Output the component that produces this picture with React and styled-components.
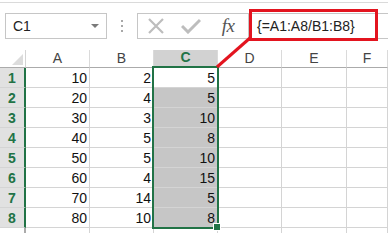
import React from 'react'
import styled, { createGlobalStyle } from 'styled-components'

const GlobalStyle = createGlobalStyle`
  body {
    margin: 0;
    background: #fff;
  }
`

const green = '#217346'
const red = '#e3141f'

const Page = styled.div`
  position: relative;
  width: 388px;
  height: 233px;
  overflow: hidden;
  background: #fff;
  font-family: 'Liberation Sans', Arial, sans-serif;
  color: #222;
`

const Toolbar = styled.div`
  display: flex;
  align-items: flex-start;
  margin-top: 2px;
  border-top: 1px solid #dadada;
  height: 48px;
  padding-top: 10px;
  box-sizing: border-box;
`

const NameBox = styled.div`
  position: relative;
  display: flex;
  align-items: center;
  margin-left: 5px;
  width: 102px;
  height: 26px;
  box-sizing: border-box;
  border: 1px solid #c6c6c6;
  padding-left: 7px;
  font-size: 14px;
`

const DropArrow = styled.span`
  position: absolute;
  right: 7px;
  top: 10px;
  border-left: 4px solid transparent;
  border-right: 4px solid transparent;
  border-top: 4px solid #7a7a7a;
`

const Dots = styled.div`
  width: 30px;
  height: 26px;
  display: flex;
  flex-direction: column;
  align-items: center;
  justify-content: center;
  gap: 3px;
  span {
    width: 2px;
    height: 2px;
    background: #a8a8a8;
  }
`

const ButtonBox = styled.div`
  display: flex;
  align-items: center;
  width: 111px;
  height: 26px;
  box-sizing: border-box;
  border: 1px solid #c6c6c6;
  border-right: none;
  padding-left: 9px;
`

const IconSlot = styled.div`
  display: flex;
  align-items: center;
  justify-content: center;
  width: ${p => p.$w}px;
  margin-right: ${p => p.$gap}px;
`

const Fx = styled.span`
  font-family: 'Liberation Serif', 'Times New Roman', serif;
  font-style: italic;
  font-size: 19px;
  color: #555;
  letter-spacing: -0.5px;
`

const FormulaBox = styled.div`
  position: relative;
  flex: 1;
  display: flex;
  align-items: center;
  height: 26px;
  box-sizing: border-box;
  border: 1px solid #c6c6c6;
  border-right: none;
  padding-left: 8px;
  font-size: 14px;
`

const Highlight = styled.div`
  position: absolute;
  left: 0;
  top: -5px;
  width: 129px;
  height: 32px;
  box-sizing: border-box;
  border: 3px solid ${red};
`

const Callout = styled.svg`
  position: absolute;
  left: 0;
  top: 0;
  pointer-events: none;
`

const Grid = styled.div`
  position: relative;
  display: grid;
  grid-template-columns: 26px 64px 64px 64px 64px 65px 1fr;
  grid-template-rows: 18px;
  grid-auto-rows: 20px;
  font-size: 14px;
`

const Corner = styled.div`
  position: relative;
  border-right: 1px solid #d4d4d4;
  border-bottom: 1px solid #ababab;
  &::after {
    content: '';
    position: absolute;
    right: 2px;
    bottom: 2px;
    border-left: 11px solid transparent;
    border-bottom: 11px solid #dcdcdc;
  }
`

const ColHead = styled.div`
  display: flex;
  align-items: flex-end;
  justify-content: center;
  padding-bottom: 1px;
  box-sizing: border-box;
  background: ${p => (p.$active ? '#d2d2d2' : '#fff')};
  color: ${p => (p.$active ? green : '#444')};
  font-weight: ${p => (p.$active ? 'bold' : 'normal')};
  border-right: 1px solid #dadada;
  border-bottom: ${p => (p.$active ? `2px solid ${green}` : '1px solid #ababab')};
`

const RowHead = styled.div`
  display: flex;
  align-items: flex-end;
  justify-content: center;
  padding-bottom: 1px;
  box-sizing: border-box;
  background: ${p => (p.$active ? '#e1e1e1' : '#fff')};
  color: ${p => (p.$active ? green : '#444')};
  font-weight: ${p => (p.$active ? 'bold' : 'normal')};
  border-right: 2px solid ${p => (p.$active ? green : '#ababab')};
  border-bottom: 1px solid #d4d4d4;
`

const Cell = styled.div`
  display: flex;
  align-items: flex-end;
  justify-content: flex-end;
  padding: 0 2px 1px 0;
  box-sizing: border-box;
  background: ${p => (p.$shade ? '#c6c6c6' : '#fff')};
  border-right: 1px solid #d4d4d4;
  border-bottom: 1px solid #d4d4d4;
  color: #111;
`

const Selection = styled.div`
  position: absolute;
  left: 152px;
  top: 16px;
  width: 67px;
  height: 163px;
  box-sizing: border-box;
  border: 2px solid ${green};
  pointer-events: none;
`

const FillHandle = styled.div`
  position: absolute;
  right: -4px;
  bottom: -4px;
  width: 6px;
  height: 6px;
  background: ${green};
  border: 1px solid #fff;
`

const cols = ['A', 'B', 'C', 'D', 'E', 'F']
const data = [
  [10, 2, 5],
  [20, 4, 5],
  [30, 3, 10],
  [40, 5, 8],
  [50, 5, 10],
  [60, 4, 15],
  [70, 14, 5],
  [80, 10, 8],
]

const CancelIcon = () => (
  <svg width="18" height="16" viewBox="0 0 18 16">
    <path d="M2 1 L16 15 M16 1 L2 15" stroke="#bdbdbd" strokeWidth="2.2" fill="none" />
  </svg>
)

const EnterIcon = () => (
  <svg width="20" height="16" viewBox="0 0 20 16">
    <path d="M1 8 L7 14 L19 2" stroke="#bdbdbd" strokeWidth="3" fill="none" />
  </svg>
)

export default function App() {
  return (
    <Page>
      <GlobalStyle />
      <Toolbar>
        <NameBox>
          C1
          <DropArrow />
        </NameBox>
        <Dots>
          <span />
          <span />
          <span />
        </Dots>
        <ButtonBox>
          <IconSlot $w={18} $gap={16}>
            <CancelIcon />
          </IconSlot>
          <IconSlot $w={20} $gap={17}>
            <EnterIcon />
          </IconSlot>
          <IconSlot $w={20} $gap={0}>
            <Fx>fx</Fx>
          </IconSlot>
        </ButtonBox>
        <FormulaBox>
          {'{=A1:A8/B1:B8}'}
          <Highlight />
        </FormulaBox>
      </Toolbar>
      <Grid>
        <Corner />
        {cols.map(c => (
          <ColHead key={c} $active={c === 'C'}>
            {c}
          </ColHead>
        ))}
        {data.map((row, i) => (
          <React.Fragment key={i}>
            <RowHead $active>{i + 1}</RowHead>
            {row.map((v, j) => (
              <Cell key={j} $shade={j === 2 && i > 0}>
                {v}
              </Cell>
            ))}
            <Cell />
            <Cell />
            <Cell />
          </React.Fragment>
        ))}
        <RowHead />
        <Cell />
        <Cell />
        <Cell />
        <Cell />
        <Cell />
        <Cell />
        <Selection>
          <FillHandle />
        </Selection>
      </Grid>
      <Callout width="388" height="233">
        <line x1="250" y1="38" x2="217" y2="67" stroke={red} strokeWidth="3" />
      </Callout>
    </Page>
  )
}
